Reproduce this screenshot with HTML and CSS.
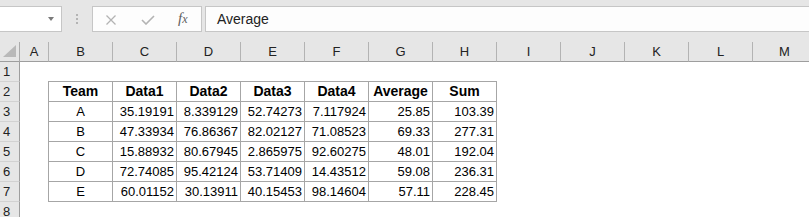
FILE: index.html
```html
<!DOCTYPE html>
<html>
<head>
<meta charset="utf-8">
<link rel="stylesheet" href="styles.css">
</head>
<body>
<div class="toolbar">
  <div class="namebox"><span class="caret"></span></div>
  <div class="grip"><i></i><i></i><i></i></div>
  <div class="fxbox">
    <svg class="ico ico-x" width="12" height="10" viewBox="0 0 12 10"><path d="M1.5 0.5 L10.5 9.5 M10.5 0.5 L1.5 9.5" stroke="#b3b3b3" stroke-width="1.3" fill="none"/></svg>
    <svg class="ico ico-ok" width="14" height="10" viewBox="0 0 14 10"><path d="M1 5 L5 9 L13 1" stroke="#b3b3b3" stroke-width="1.6" fill="none"/></svg>
    <span class="fx">f<span class="fx-x">x</span></span>
  </div>
  <div class="formula">Average</div>
</div>

<div class="sheet">
  <div class="row hdr">
    <div class="corner"><svg width="19" height="19" viewBox="0 0 19 19"><polygon points="3,15 16,15 16,3" fill="#b9b9b9"/></svg></div>
    <div class="cl">A</div><div class="cl">B</div><div class="cl">C</div><div class="cl">D</div><div class="cl">E</div><div class="cl">F</div><div class="cl">G</div><div class="cl">H</div><div class="cl">I</div><div class="cl">J</div><div class="cl">K</div><div class="cl">L</div><div class="cl">M</div>
  </div>
  <div class="row">
    <div class="rh">1</div>
    <div class="top"></div>
  </div>
  <div class="row">
    <div class="rh">2</div>
    <div class="t first b">Team</div><div class="t b">Data1</div><div class="t b">Data2</div><div class="t b">Data3</div><div class="t b">Data4</div><div class="t b">Average</div><div class="t b">Sum</div>
  </div>
  <div class="row">
    <div class="rh">3</div>
    <div class="t first ctr">A</div><div class="t">35.19191</div><div class="t">8.339129</div><div class="t">52.74273</div><div class="t">7.117924</div><div class="t">25.85</div><div class="t">103.39</div>
  </div>
  <div class="row">
    <div class="rh">4</div>
    <div class="t first ctr">B</div><div class="t">47.33934</div><div class="t">76.86367</div><div class="t">82.02127</div><div class="t">71.08523</div><div class="t">69.33</div><div class="t">277.31</div>
  </div>
  <div class="row">
    <div class="rh">5</div>
    <div class="t first ctr">C</div><div class="t">15.88932</div><div class="t">80.67945</div><div class="t">2.865975</div><div class="t">92.60275</div><div class="t">48.01</div><div class="t">192.04</div>
  </div>
  <div class="row">
    <div class="rh">6</div>
    <div class="t first ctr">D</div><div class="t">72.74085</div><div class="t">95.42124</div><div class="t">53.71409</div><div class="t">14.43512</div><div class="t">59.08</div><div class="t">236.31</div>
  </div>
  <div class="row">
    <div class="rh">7</div>
    <div class="t first ctr">E</div><div class="t">60.01152</div><div class="t">30.13911</div><div class="t">40.15453</div><div class="t">98.14604</div><div class="t">57.11</div><div class="t">228.45</div>
  </div>
  <div class="row">
    <div class="rh">8</div>
  </div>
</div>
</body>
</html>
```
FILE: styles.css
```css
html, body {
  margin: 0;
  padding: 0;
}
body {
  width: 809px;
  height: 217px;
  overflow: hidden;
  background: #ffffff;
  font-family: "Liberation Sans", Arial, sans-serif;
  color: #000;
}

/* ---------- formula toolbar ---------- */
.toolbar {
  display: flex;
  align-items: flex-start;
  box-sizing: border-box;
  height: 42px;
  padding-top: 6px;
  background: #e6e6e6;
}
.namebox {
  box-sizing: border-box;
  width: 63px;
  height: 26px;
  margin-left: -1px;
  background: #ffffff;
  border: 1px solid #c6c6c6;
  display: flex;
  align-items: center;
  justify-content: flex-end;
  padding-right: 7px;
}
.caret {
  width: 0;
  height: 0;
  border-left: 3.5px solid transparent;
  border-right: 3.5px solid transparent;
  border-top: 4px solid #7a7a7a;
  margin-top: -1px;
}
.grip {
  display: flex;
  flex-direction: column;
  gap: 2px;
  margin-left: 14px;
  margin-top: 8px;
}
.grip i {
  display: block;
  width: 2px;
  height: 2px;
  background: #b4b4b4;
}
.fxbox {
  box-sizing: border-box;
  width: 110px;
  height: 26px;
  margin-left: 14px;
  background: #fdfdfd;
  border: 1px solid #c6c6c6;
  display: flex;
  align-items: center;
  padding-left: 12px;
}
.ico {
  display: block;
  margin-top: 1px;
}
.ico-ok {
  margin-left: 24px;
}
.fx {
  margin-left: 23px;
  font-family: "Liberation Serif", "Times New Roman", serif;
  font-style: italic;
  font-size: 15px;
  color: #606060;
  line-height: 1;
  margin-top: -1px;
}
.fx-x {
  font-size: 12px;
}
.formula {
  box-sizing: border-box;
  flex: 1;
  height: 26px;
  margin-left: 3px;
  margin-right: -10px;
  background: #fdfdfd;
  border: 1px solid #c6c6c6;
  padding-left: 11px;
  font-size: 14px;
  line-height: 24px;
  color: #222;
}

/* ---------- sheet grid ---------- */
.row {
  display: grid;
  grid-template-columns: 20px 29px repeat(12, 64px);
  height: 20px;
}
.row > div {
  box-sizing: border-box;
  height: 20px;
  font-size: 13px;
  line-height: 19px;
  white-space: nowrap;
  overflow: hidden;
}
.hdr {
  background: #e6e6e6;
}
.corner {
  border-right: 1px solid #ababab;
  border-bottom: 1px solid #9e9e9e;
}
.corner svg {
  display: block;
}
.cl {
  text-align: center;
  color: #222;
  border-right: 1px solid #b3b3b3;
  border-bottom: 1px solid #9e9e9e;
}
.rh {
  background: #e6e6e6;
  border-right: 1px solid #9e9e9e;
  border-bottom: 1px solid #d2d2d2;
  padding-left: 3px;
  color: #222;
}
.top {
  grid-column: 3 / 10;
  margin-left: -1px;
  border-bottom: 1px solid #a6a6a6;
}
.t {
  border-right: 1px solid #a6a6a6;
  border-bottom: 1px solid #a6a6a6;
  text-align: right;
  padding: 0 2px;
}
.t.first {
  grid-column: 3;
  margin-left: -1px;
  border-left: 1px solid #a6a6a6;
}
.t.ctr {
  text-align: center;
}
.row > .t.b {
  text-align: center;
  font-weight: bold;
  font-size: 14px;
}
```
